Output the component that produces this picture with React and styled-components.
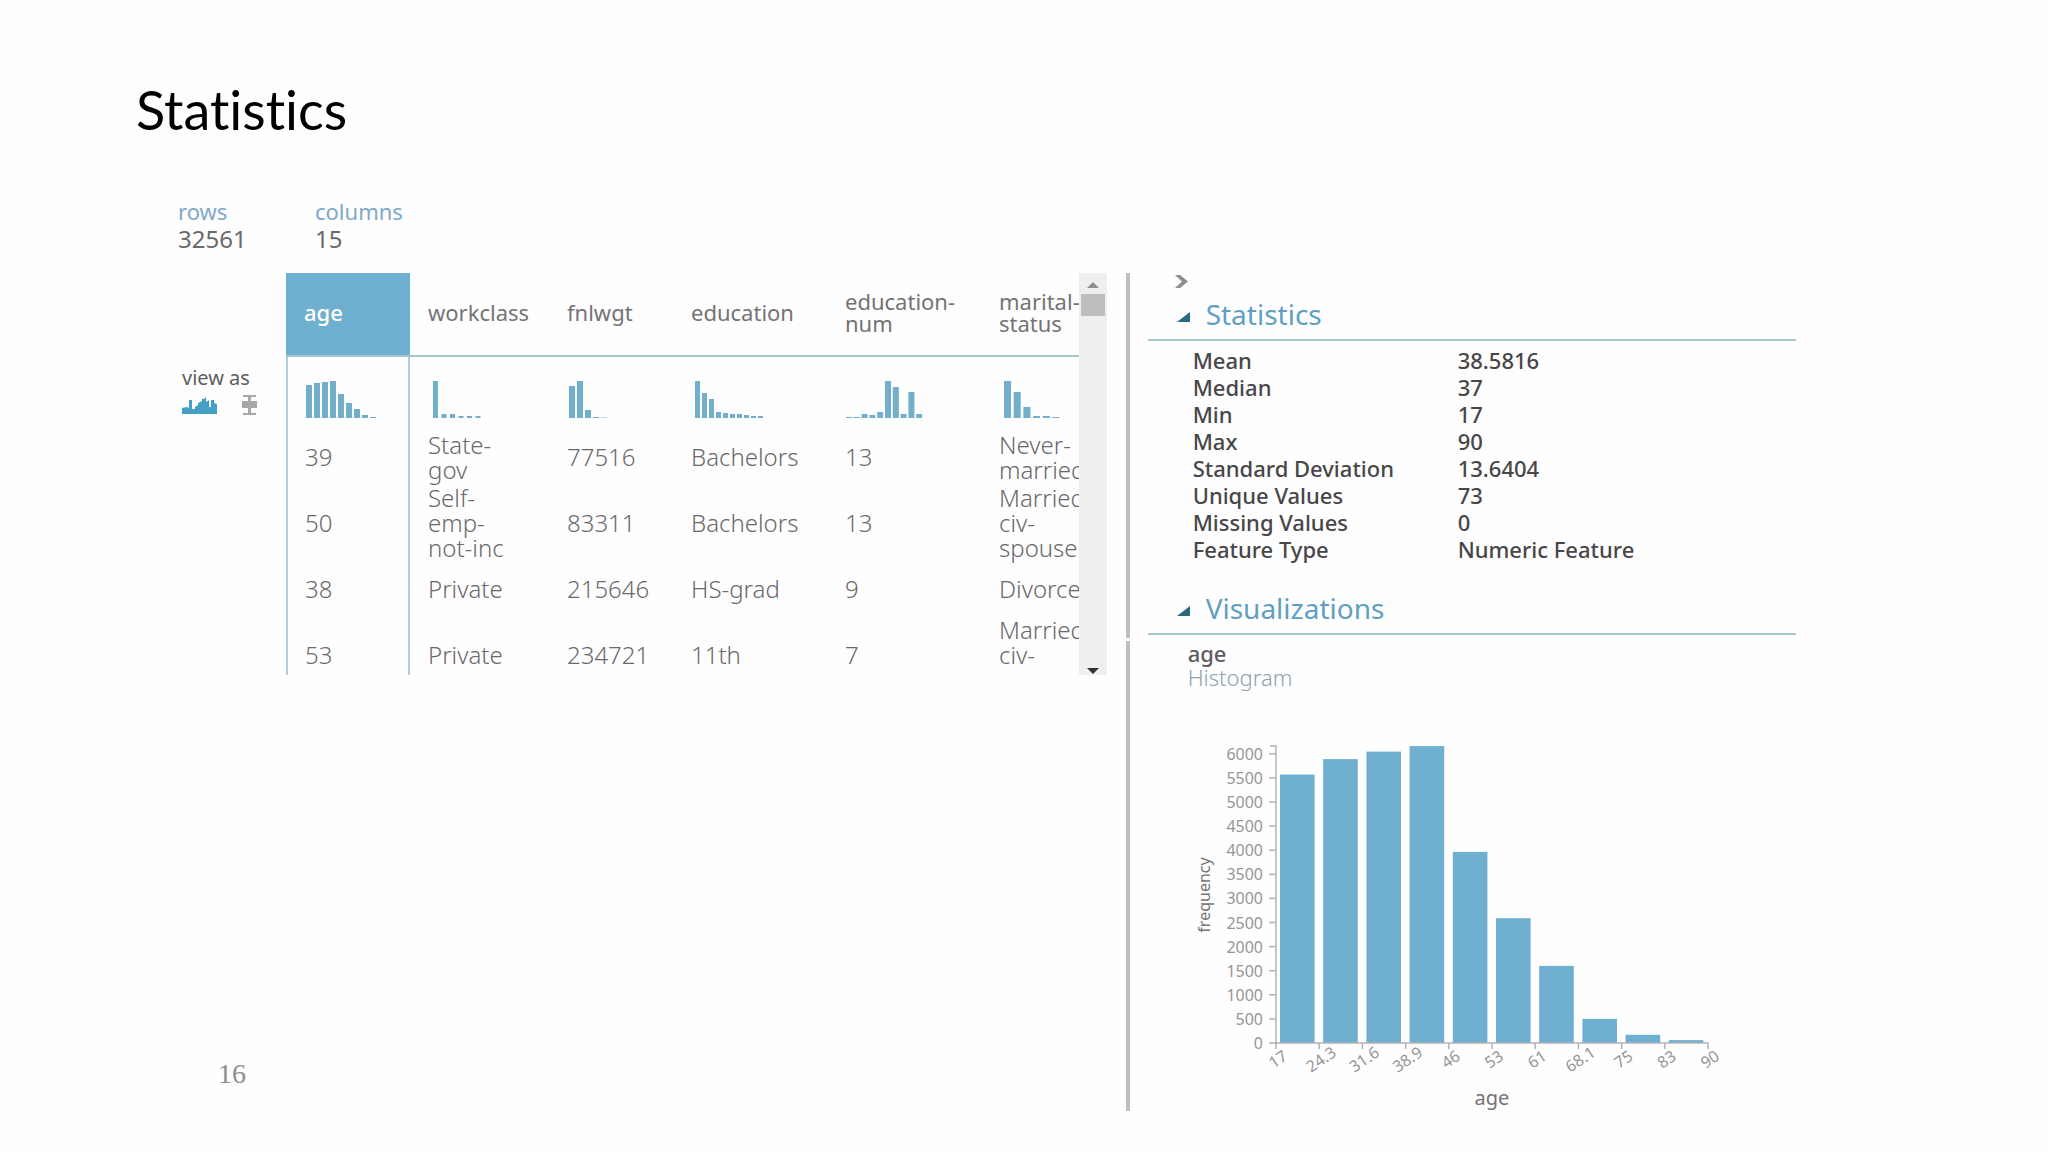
import React from "react";
import styled, { createGlobalStyle } from "styled-components";

const COLUMNS = [
  { name: "age", width: 124, bars: [33, 35, 36, 37, 24, 15, 9, 3, 1], step: 8, bar: 6, start: 1 },
  { name: "workclass", width: 139, bars: [37, 4, 4, 2, 2, 2], step: 8.5, bar: 5, start: 5 },
  { name: "fnlwgt", width: 124, bars: [32, 37, 8, 1, 0.5], step: 8, bar: 6, start: 2 },
  { name: "education", width: 154, bars: [37, 25, 19, 6, 5, 4, 4, 3, 2, 2], step: 7, bar: 5, start: 4 },
  { name: "education-\nnum", width: 154, bars: [1, 1, 4, 3, 6, 37, 31, 4, 26, 4], step: 7.8, bar: 6, start: 1 },
  { name: "marital-\nstatus", width: 141, bars: [37, 26, 11, 2, 2, 1], step: 9.7, bar: 7, start: 5 },
];

const ROWS = [
  ["39", "State-\ngov", "77516", "Bachelors", "13", "Never-\nmarried"],
  ["50", "Self-\nemp-\nnot-inc", "83311", "Bachelors", "13", "Married-\nciv-\nspouse"],
  ["38", "Private", "215646", "HS-grad", "9", "Divorced"],
  ["53", "Private", "234721", "11th", "7", "Married-\nciv-\nspouse"],
];

const STATS = [
  ["Mean", "38.5816"],
  ["Median", "37"],
  ["Min", "17"],
  ["Max", "90"],
  ["Standard Deviation", "13.6404"],
  ["Unique Values", "73"],
  ["Missing Values", "0"],
  ["Feature Type", "Numeric Feature"],
];

const BINS = [5570, 5890, 6046, 6160, 3965, 2590, 1600, 500, 170, 60];
const BIN_LABELS = ["17", "24.3", "31.6", "38.9", "46", "53", "61", "68.1", "75", "83", "90"];
const TICKS = [0, 500, 1000, 1500, 2000, 2500, 3000, 3500, 4000, 4500, 5000, 5500, 6000];

function Sparkline({ bars, step, bar, start }) {
  return (
    <Spark width="90" height="37" aria-hidden="true">
      {bars.map((h, i) => (
        <rect key={i} x={start + i * step} y={37 - h} width={bar} height={h} />
      ))}
    </Spark>
  );
}

function Histogram() {
  const left = 88;
  const base = 313;
  const step = 43.2;
  const y = (value) => base - value * 0.0482;

  return (
    <Plot width="560" height="380" role="img" aria-label="Histogram of age">
      <g fill="#6fb0d1">
        {BINS.map((value, i) => (
          <rect key={i} x={left + 4 + i * step} y={y(value)} width="34.6" height={base - y(value)} />
        ))}
      </g>
      <g fill="none" stroke="#b5b2b5" strokeWidth="1.5">
        <path d={`M${left - 6} 16H${left}V${base}H${left + 432}V${base + 6}`} />
        {TICKS.map((t) => (
          <path key={t} d={`M${left - 7} ${y(t)}H${left}`} />
        ))}
        {BIN_LABELS.slice(0, -1).map((label, i) => (
          <path key={label} d={`M${left + i * step} ${base}v6`} />
        ))}
      </g>
      <g fill="#979597" fontSize="16">
        {TICKS.map((t) => (
          <text key={t} x={left - 13} y={y(t) + 6} textAnchor="end">
            {t}
          </text>
        ))}
        {BIN_LABELS.map((label, i) => (
          <text
            key={label}
            textAnchor="middle"
            transform={`translate(${left + 5 + i * step} ${base + 21}) rotate(-34)`}
          >
            {label}
          </text>
        ))}
      </g>
      <g fill="#757375">
        <text x="304" y="375" fontSize="20" textAnchor="middle">
          age
        </text>
        <text fontSize="16" textAnchor="middle" transform="translate(22 165) rotate(-90)">
          frequency
        </text>
      </g>
    </Plot>
  );
}

function SectionTitle({ children }) {
  return (
    <SectionHeading>
      <SectionToggle type="button" aria-expanded="true">
        <svg width="13" height="15" aria-hidden="true">
          <path d="M13 5V15H0Z" fill="#28697f" />
        </svg>
        {children}
      </SectionToggle>
    </SectionHeading>
  );
}

export default function App() {
  return (
    <Page>
      <GlobalStyle />
      <Title>Statistics</Title>
      <Summary>
        <Figure>
          <dt>rows</dt>
          <dd>32561</dd>
        </Figure>
        <Figure>
          <dt>columns</dt>
          <dd>15</dd>
        </Figure>
      </Summary>
      <Main>
        <Left>
          <Viewer>
            <ViewAs>
              <span>view as</span>
              <ViewOptions>
                <IconButton type="button" aria-label="Histogram view">
                  <svg width="36" height="20">
                    <path
                      d="M0 19V13L5 12L7 13V5H10V14H13V12L16 10V8L20 6V4H22L24 2V7L27 5V12H29V5H32V8L35 9V19Z"
                      fill="#459fc4"
                    />
                  </svg>
                </IconButton>
                <IconButton type="button" aria-label="Box plot view">
                  <svg width="15" height="20" fill="#a8a6a8">
                    <path d="M1 0H14V2H9V6H15V13H9V18H14V20H1V18H6V13H0V6H6V2H1Z" />
                  </svg>
                </IconButton>
              </ViewOptions>
            </ViewAs>
            <TableWindow>
              <DataTable>
                <colgroup>
                  {COLUMNS.map((c) => (
                    <Col key={c.name} $width={c.width} />
                  ))}
                </colgroup>
                <thead>
                  <tr>
                    {COLUMNS.map((c, i) => (
                      <HeadCell key={c.name} $selected={i === 0}>
                        {c.name}
                      </HeadCell>
                    ))}
                  </tr>
                </thead>
                <tbody>
                  <tr>
                    {COLUMNS.map((c, i) => (
                      <SparkCell key={c.name} $selected={i === 0}>
                        <Sparkline {...c} />
                      </SparkCell>
                    ))}
                  </tr>
                  {ROWS.map((row) => (
                    <tr key={row[0]}>
                      {row.map((value, i) => (
                        <Cell key={i} $selected={i === 0}>
                          {value}
                        </Cell>
                      ))}
                    </tr>
                  ))}
                </tbody>
              </DataTable>
            </TableWindow>
            <ScrollBar>
              <svg width="12" height="6" aria-hidden="true">
                <path d="M0 6L6 0L12 6Z" fill="#8f8d8f" />
              </svg>
              <Thumb />
              <ScrollEnd width="12" height="6" aria-hidden="true">
                <path d="M0 0H12L6 6Z" fill="#333" />
              </ScrollEnd>
            </ScrollBar>
          </Viewer>
          <PageNumber>16</PageNumber>
        </Left>
        <Right>
          <Details>
            <CollapseButton type="button" aria-label="Collapse panel">
              <svg width="13" height="13" fill="#8f8d8f">
                <path d="M0 0H5L13 6.5L5 13H0L7 6.5Z" />
              </svg>
            </CollapseButton>
            <SectionTitle>Statistics</SectionTitle>
            <StatsTable>
              <tbody>
                {STATS.map(([name, value]) => (
                  <tr key={name}>
                    <th scope="row">{name}</th>
                    <td>{value}</td>
                  </tr>
                ))}
              </tbody>
            </StatsTable>
            <SectionTitle>Visualizations</SectionTitle>
          </Details>
          <Chart>
            <ChartName>age</ChartName>
            <ChartKind>Histogram</ChartKind>
            <Histogram />
          </Chart>
        </Right>
      </Main>
    </Page>
  );
}

const GlobalStyle = createGlobalStyle`
  * {
    box-sizing: border-box;
  }

  body {
    margin: 0;
    background: #fefefe;
    font-family: "Noto Sans", "Open Sans", sans-serif;
  }

  button {
    border: none;
    padding: 0;
    background: none;
    font: inherit;
    color: inherit;
    cursor: pointer;
  }

  svg {
    display: block;
  }
`;

const Page = styled.div`
  display: flex;
  flex-direction: column;
  padding: 78px 252px 40px 176px;
`;

const Title = styled.h1`
  margin: 0 0 0 -40px;
  font-family: Lato, sans-serif;
  font-size: 54px;
  line-height: 64px;
  font-weight: 400;
  font-variant-ligatures: none;
  color: #000;
`;

const Summary = styled.dl`
  display: grid;
  grid-template-columns: 137px 136px;
  margin: 56px 0 21px;
  padding-left: 2px;
`;

const Figure = styled.div`
  line-height: 27px;

  dt {
    font-size: 22px;
    color: #7fa9cb;
  }

  dd {
    margin: 0;
    font-size: 24px;
    color: #6b696b;
  }
`;

const Main = styled.main`
  display: grid;
  grid-template-columns: minmax(0, 17fr) minmax(0, 12fr);
`;

const Left = styled.div`
  display: flex;
  flex-direction: column;
  justify-content: space-between;
`;

const Viewer = styled.div`
  display: grid;
  grid-template-columns: 110px minmax(0, 1fr) 28px;
  height: 402px;
  padding-right: 19px;
`;

const ViewAs = styled.div`
  padding: 92px 0 0 6px;
  font-size: 20px;
  line-height: 26px;
  color: #5f5d5f;
`;

const ViewOptions = styled.div`
  display: flex;
  gap: 24px;
  padding-top: 4px;
`;

const IconButton = styled.button`
  display: flex;
`;

const TableWindow = styled.div`
  overflow: hidden;
`;

const DataTable = styled.table`
  table-layout: fixed;
  width: 836px;
  border-collapse: separate;
  border-spacing: 0;
`;

const Col = styled.col`
  width: ${(props) => props.$width}px;
`;

const HeadCell = styled.th`
  height: 84px;
  padding: 0 0 4px 18px;
  border-bottom: 2px solid #a5c5ce;
  background: ${(props) => (props.$selected ? "#6fb0d1" : "transparent")};
  color: ${(props) => (props.$selected ? "#fff" : "#757375")};
  font-size: 22px;
  line-height: 22px;
  font-weight: ${(props) => (props.$selected ? 500 : 400)};
  text-align: left;
  white-space: pre;
`;

const Cell = styled.td`
  height: 57px;
  padding: 0 0 0 ${(props) => (props.$selected ? 17 : 18)}px;
  border: 0 solid #b4cbda;
  border-width: ${(props) => (props.$selected ? "0 2px" : 0)};
  font-size: 24px;
  line-height: 25px;
  font-weight: 300;
  color: #6b696b;
  white-space: pre;
`;

const SparkCell = styled(Cell)`
  height: 71px;
  padding-top: 24px;
  vertical-align: top;
`;

const Spark = styled.svg`
  fill: #72afcd;
`;

const ScrollBar = styled.div`
  display: flex;
  flex-direction: column;
  align-items: center;
  padding: 9px 2px 1px;
  background: #f0eff0;
`;

const Thumb = styled.div`
  width: 24px;
  height: 22px;
  margin-top: 6px;
  background: #bfbdbd;
`;

const ScrollEnd = styled.svg`
  margin-top: auto;
`;

const PageNumber = styled.footer`
  padding: 0 0 22px 42px;
  font-family: "Liberation Serif", serif;
  font-size: 28px;
  line-height: 30px;
  color: #8f8d8f;
`;

const Right = styled.div`
  display: flex;
  flex-direction: column;
  gap: 3px;
`;

const Details = styled.section`
  display: flex;
  flex-direction: column;
  height: 365px;
  padding-left: 18px;
  border-left: 4px solid #bfbdbf;
`;

const CollapseButton = styled.button`
  align-self: flex-start;
  margin: 2px 0 0 27px;
`;

const SectionHeading = styled.h2`
  margin: 8px 0 0;
  padding: 0 0 7px 29px;
  border-bottom: 2px solid #a9c6cd;
  font-size: 28px;
  line-height: 36px;
  font-weight: 400;
  color: #5f9fc4;
`;

const SectionToggle = styled.button`
  display: flex;
  align-items: center;
  gap: 16px;
`;

const StatsTable = styled.table`
  margin: 6px 0 19px 45px;
  border-spacing: 0;
  font-size: 22px;
  line-height: 27px;
  color: #484648;

  th,
  td {
    padding: 0;
    font-weight: 500;
    text-align: left;
  }

  th {
    width: 265px;
  }
`;

const Chart = styled.section`
  height: 470px;
  padding: 0 0 0 58px;
  border-left: 4px solid #bfbdbf;
`;

const ChartName = styled.h3`
  margin: 0;
  font-size: 22px;
  line-height: 24px;
  font-weight: 500;
  color: #5f5d5f;
`;

const ChartKind = styled.p`
  margin: 0;
  font-size: 22px;
  line-height: 24px;
  font-weight: 300;
  color: #8ba3ae;
`;

const Plot = styled.svg`
  margin-top: 41px;
`;
